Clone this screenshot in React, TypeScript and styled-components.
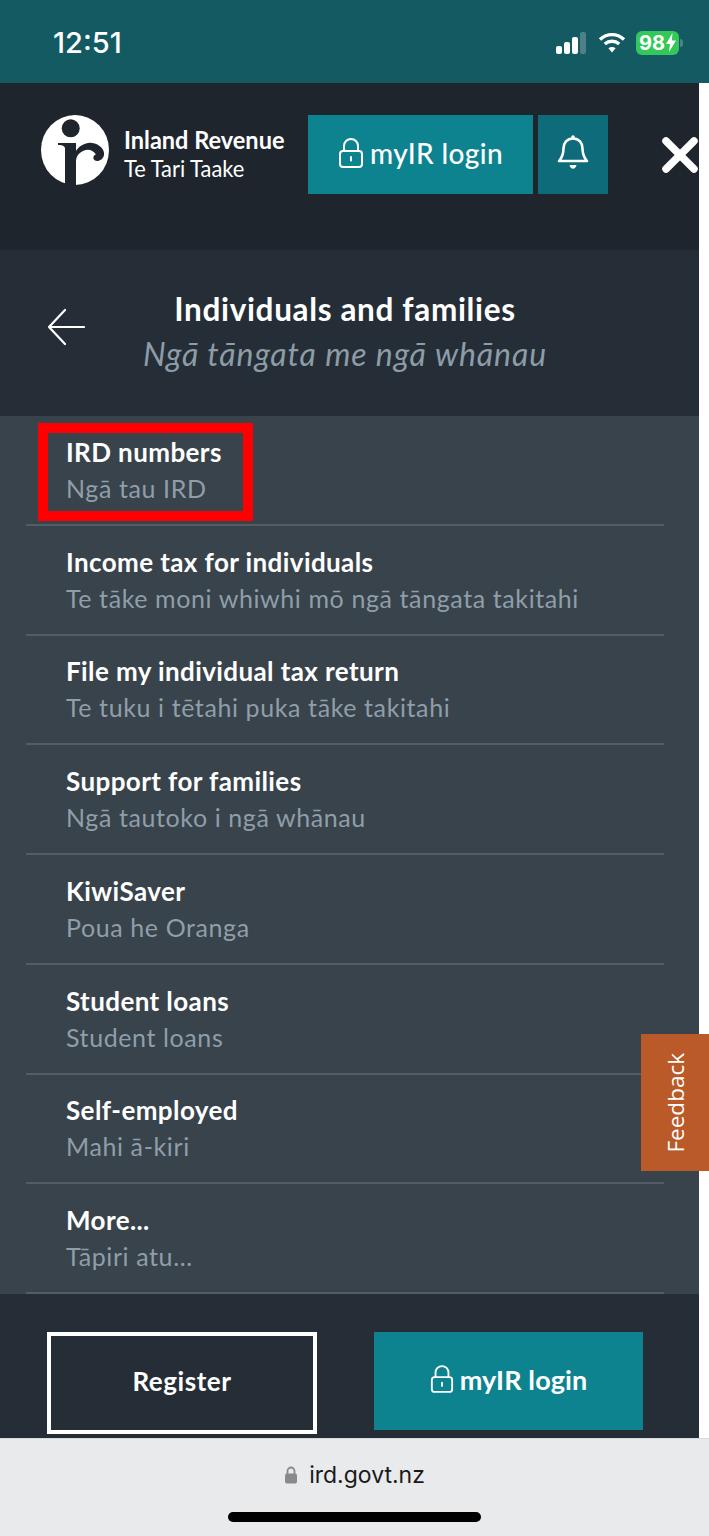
import React from "react";
import styled, { createGlobalStyle } from "styled-components";

const Global = createGlobalStyle`
  html, body { margin: 0; padding: 0; background: #fff; }
  * { box-sizing: border-box; }
  body { font-family: "Lato", "Open Sans", sans-serif; }
`;

const Screen = styled.div`
  position: relative;
  width: 709px;
  height: 1536px;
  overflow: hidden;
  display: flex;
  flex-direction: column;
  background: #fff;
`;

const StatusBar = styled.div`
  height: 83px;
  background: #135a62;
  display: flex;
  align-items: center;
  justify-content: space-between;
  padding: 2px 30px 0 53px;
  color: #fff;
`;
const Clock = styled.span`
  font-family: "Inter", sans-serif;
  font-size: 29px;
  font-weight: 500;
  letter-spacing: 0;
`;
const StatusIcons = styled.div`
  display: flex;
  align-items: center;
  gap: 10px;
`;
const Battery = styled.div`
  position: relative;
  width: 43px;
  height: 24px;
  background: #34c759;
  border-radius: 6px;
  display: flex;
  align-items: center;
  padding-left: 3px;
  gap: 0;
  font-family: "Inter", sans-serif;
  font-size: 20px;
  font-weight: 700;
  color: #fff;
  letter-spacing: 0;
  &::after {
    content: "";
    position: absolute;
    right: -4px;
    top: 8px;
    width: 3px;
    height: 8px;
    border-radius: 0 3px 3px 0;
    background: #4d8187;
  }
`;

const Page = styled.div`
  width: 699px;
  flex: 0 0 1355px;
  display: flex;
  flex-direction: column;
`;

const Header = styled.header`
  height: 167px;
  background: #1e252d;
  display: flex;
  align-items: flex-start;
  padding: 32px 0 0 41px;
`;
const Brand = styled.div`
  width: 267px;
  display: flex;
  align-items: center;
  gap: 15px;
  height: 70px;
`;
const BrandText = styled.div`
  display: flex;
  flex-direction: column;
  color: #fff;
  white-space: nowrap;
  gap: 0;
  margin-top: 6px;
`;
const BrandMain = styled.span`
  font-size: 24px;
  line-height: 29px;
  font-weight: 700;
  display: inline-block;
  transform: scaleX(0.98);
  transform-origin: left center;
`;
const BrandSub = styled.span`
  font-size: 23px;
  line-height: 28px;
  font-weight: 400;
  display: inline-block;
  transform: scaleX(0.95);
  transform-origin: left center;
`;
const HeaderLogin = styled.button`
  width: 225px;
  height: 79px;
  border: 0;
  padding: 0 0 4px;
  background: #0e8390;
  color: #fff;
  display: flex;
  align-items: center;
  justify-content: center;
  gap: 6px;
  font-family: "Lato", sans-serif;
  font-size: 28px;
  font-weight: 500;
  letter-spacing: 0.35px;
`;
const BellButton = styled.button`
  width: 70px;
  height: 79px;
  margin-left: 5px;
  border: 0;
  padding: 0 0 5px;
  background: #0e6b79;
  color: #fff;
  display: flex;
  align-items: center;
  justify-content: center;
`;
const CloseButton = styled.button`
  border: 0;
  background: transparent;
  padding: 0;
  margin: 22px 0 0 54px;
  width: 36px;
  height: 36px;
  display: flex;
  color: #fff;
`;

const TitleBar = styled.div`
  position: relative;
  height: 166px;
  background: #252e37;
  display: flex;
  flex-direction: column;
  align-items: center;
  padding: 39px 9px 0 0;
`;
const BackArrow = styled.span`
  position: absolute;
  left: 47px;
  top: 58px;
  display: flex;
  color: #fff;
`;
const Title = styled.h1`
  margin: 0;
  font-size: 31.5px;
  line-height: 40px;
  font-weight: 700;
  color: #fff;
  letter-spacing: 0.65px;
`;
const Subtitle = styled.p`
  margin: 5px 0 0;
  font-size: 32px;
  line-height: 40px;
  font-style: italic;
  font-weight: 400;
  color: #8d9ca6;
  letter-spacing: 0.9px;
`;

const List = styled.nav`
  position: relative;
  height: 878px;
  background: #39434c;
  padding: 0 35px 0 26px;
  display: grid;
  grid-auto-rows: 1fr;
`;
const Row = styled.a`
  display: flex;
  flex-direction: column;
  justify-content: flex-end;
  padding: 0 0 21px 40px;
  border-bottom: 2px solid #535d66;
`;
const RowTitle = styled.span`
  font-size: 26px;
  line-height: 30px;
  font-weight: 700;
  color: #fff;
  letter-spacing: 0.4px;
`;
const RowSub = styled.span`
  margin-top: 6px;
  font-size: 25px;
  line-height: 30px;
  font-weight: 400;
  color: #8f9ea8;
  letter-spacing: 0.6px;
`;
const Highlight = styled.div`
  position: absolute;
  left: 38px;
  top: 7px;
  width: 215px;
  height: 98px;
  border: 10px solid #ff0000;
`;

const Footer = styled.div`
  height: 144px;
  background: #252e37;
  display: flex;
  align-items: flex-start;
  padding: 38px 0 0 47px;
  gap: 57px;
`;
const RegisterButton = styled.button`
  width: 270px;
  height: 102px;
  border: 4px solid #fff;
  background: transparent;
  color: #fff;
  font-family: "Lato", sans-serif;
  font-size: 26px;
  font-weight: 700;
  letter-spacing: 0.55px;
  padding: 0 0 4px;
`;
const FooterLogin = styled.button`
  width: 269px;
  height: 98px;
  border: 0;
  background: #0e8390;
  color: #fff;
  display: flex;
  align-items: center;
  justify-content: center;
  gap: 6px;
  font-family: "Lato", sans-serif;
  font-size: 27px;
  font-weight: 700;
  letter-spacing: 0.1px;
  padding: 0 0 4px;
`;

const BrowserBar = styled.div`
  flex: 1;
  background: #e9eaec;
  border-top: 1px solid #d9dadc;
  display: flex;
  flex-direction: column;
  align-items: center;
`;
const Address = styled.div`
  margin-top: 21px;
  display: flex;
  align-items: center;
  gap: 11px;
  height: 30px;
  font-family: "Inter", sans-serif;
  font-size: 23px;
  color: #1a1a1a;
`;
const HomeIndicator = styled.div`
  width: 253px;
  height: 10px;
  margin-top: 22px;
  border-radius: 5px;
  background: #000;
`;

const Feedback = styled.div`
  position: absolute;
  left: 641px;
  top: 1034px;
  width: 68px;
  height: 137px;
  background: #b95a28;
  color: #fff;
  display: flex;
  align-items: center;
  justify-content: center;
  font-family: "Open Sans", sans-serif;
  font-size: 22.5px;
  & > span {
    writing-mode: vertical-rl;
    transform: rotate(180deg);
  }
`;

const Lock = ({ w = 26, h = 32 }: { w?: number; h?: number }) => (
  <svg width={w} height={h} viewBox="0 0 26 32" fill="none" stroke="currentColor" strokeWidth="2" aria-hidden="true">
    <path d="M6 14V9a7 7 0 0 1 14 0v5" />
    <rect x="2" y="14" width="22" height="16" rx="3" />
    <path d="M13 20v3.5" strokeLinecap="round" />
  </svg>
);

const Logo = () => (
  <svg width="68" height="70" viewBox="0 0 68 70" aria-label="Inland Revenue logo">
    <ellipse cx="34" cy="35" rx="34" ry="35" fill="#fff" />
    <circle cx="29.7" cy="13.3" r="9" fill="#1e252d" />
    <path
      fill="#1e252d"
      d="M17 28H35V36C38 31 45 27 51 28C59 29 64 35 63 40C62 45 57 47 54 45.5C51.5 44 52 40 55 39.5C52 35 47 33.5 42 36C37 38.5 35 42 35 47V70H24V33C23.5 30.5 20 29.5 17 30Z"
    />
  </svg>
);

const rows = [
  ["IRD numbers", "Ngā tau IRD"],
  ["Income tax for individuals", "Te tāke moni whiwhi mō ngā tāngata takitahi"],
  ["File my individual tax return", "Te tuku i tētahi puka tāke takitahi"],
  ["Support for families", "Ngā tautoko i ngā whānau"],
  ["KiwiSaver", "Poua he Oranga"],
  ["Student loans", "Student loans"],
  ["Self-employed", "Mahi ā-kiri"],
  ["More...", "Tāpiri atu..."],
];

export default function App() {
  return (
    <>
      <Global />
      <Screen>
        <StatusBar>
          <Clock>12:51</Clock>
          <StatusIcons>
            <svg width="32" height="22" viewBox="0 0 32 22" aria-hidden="true">
              <rect x="0" y="14" width="6" height="8" rx="2" fill="#fff" />
              <rect x="8" y="10" width="6" height="12" rx="2" fill="#fff" />
              <rect x="16" y="5" width="6" height="17" rx="2" fill="#fff" />
              <rect x="24" y="0" width="6" height="22" rx="2" fill="#4d8187" />
            </svg>
            <svg width="28" height="21" viewBox="0 0 28 21" fill="none" stroke="#fff" strokeWidth="3.4" aria-hidden="true">
              <path d="M2 7.5C9 1 19 1 26 7.5" />
              <path d="M6.8 12C11 8.4 17 8.4 21.2 12" />
              <path d="M14 20.5l-3.6-4.2c2-1.6 5.2-1.6 7.2 0z" fill="#fff" stroke="none" />
            </svg>
            <Battery>
              98
              <svg width="12" height="19" viewBox="0 0 12 19" aria-hidden="true">
                <path d="M7.5 0L1 11h4l-1 8 7-11.5H6.8z" fill="#fff" />
              </svg>
            </Battery>
          </StatusIcons>
        </StatusBar>

        <Page>
          <Header>
            <Brand>
              <Logo />
              <BrandText>
                <BrandMain>Inland Revenue</BrandMain>
                <BrandSub>Te Tari Taake</BrandSub>
              </BrandText>
            </Brand>
            <HeaderLogin>
              <Lock />
              myIR login
            </HeaderLogin>
            <BellButton>
              <svg width="32" height="36" viewBox="0 0 32 36" fill="none" stroke="currentColor" strokeWidth="2.6" aria-hidden="true">
                <path d="M16 4.5c-6 0-9.5 4.5-9.5 10 0 6-1.5 9-4.5 12.5h28c-3-3.500-4.500-6.500-4.500-12.500 0-5.500-3.500-10-9.500-10z" strokeLinejoin="round" />
                <circle cx="16" cy="3" r="1.800" fill="currentColor" stroke="none" />
                <path d="M12.500 31h7c-.5 2.500-2 3.800-3.500 3.800s-3-1.300-3.500-3.800z" fill="currentColor" stroke="none" />
              </svg>
            </BellButton>
            <CloseButton aria-label="Close">
              <svg width="36" height="36" viewBox="0 0 36 36" stroke="currentColor" strokeWidth="7.500" strokeLinecap="round" aria-hidden="true">
                <path d="M4 4L32 32M32 4L4 32" />
              </svg>
            </CloseButton>
          </Header>

          <TitleBar>
            <BackArrow>
              <svg width="38" height="38" viewBox="0 0 38 38" fill="none" stroke="currentColor" strokeWidth="2.200" strokeLinecap="round" strokeLinejoin="round" aria-hidden="true">
                <path d="M37 19H2M18 2L2 19L18 36" />
              </svg>
            </BackArrow>
            <Title>Individuals and families</Title>
            <Subtitle>Ngā tāngata me ngā whānau</Subtitle>
          </TitleBar>

          <List>
            {rows.map(([title, sub]) => (
              <Row key={title}>
                <RowTitle>{title}</RowTitle>
                <RowSub>{sub}</RowSub>
              </Row>
            ))}
            <Highlight />
          </List>

          <Footer>
            <RegisterButton>Register</RegisterButton>
            <FooterLogin>
              <Lock w={24} h={30} />
              myIR login
            </FooterLogin>
          </Footer>
        </Page>

        <BrowserBar>
          <Address>
            <svg width="14" height="18" viewBox="0 0 14 18" aria-hidden="true">
              <path d="M3.500 8V5a3.500 3.500 0 0 1 7 0v3" fill="none" stroke="#8a8a8e" strokeWidth="1.800" />
              <rect x="1" y="7.500" width="12" height="10" rx="2" fill="#8a8a8e" />
            </svg>
            ird.govt.nz
          </Address>
          <HomeIndicator />
        </BrowserBar>

        <Feedback>
          <span>Feedback</span>
        </Feedback>
      </Screen>
    </>
  );
}
